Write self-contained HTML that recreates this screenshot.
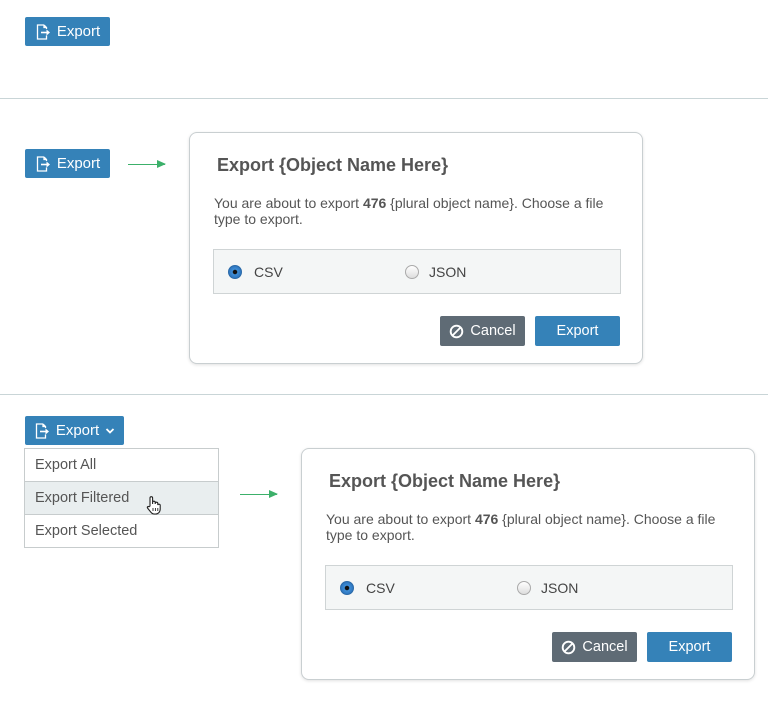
<!DOCTYPE html>
<html><head><meta charset="utf-8"><style>
*{box-sizing:border-box;margin:0;padding:0}
body{width:768px;height:702px;background:#fff;font-family:"Liberation Sans",Arial,sans-serif;position:relative;overflow:hidden;color:#555}
.abs{position:absolute}
.btn{position:absolute;background:#3582b8;color:#fff;border-radius:2px;font-size:15px;display:flex;align-items:center;justify-content:center;height:29px}
.hr{position:absolute;left:0;width:768px;height:1px;background:#c9d5d7}
.arrow{position:absolute;height:1px;background:#3cb06a}
.arrow:after{content:"";position:absolute;right:-1px;top:-4px;border-left:9px solid #3cb06a;border-top:4.5px solid transparent;border-bottom:4.5px solid transparent}
.dlg{position:absolute;width:454px;height:232px;border:1px solid #c9cfd1;border-radius:8px;background:#fff;box-shadow:0 1px 3px rgba(0,0,0,.12)}
.dlg h2{position:absolute;left:27px;top:22px;font-size:18px;font-weight:bold;color:#555}
.dlg p{position:absolute;left:24px;top:62px;width:398px;font-size:14px;line-height:16px;color:#555}
.box{position:absolute;left:23px;top:116px;width:408px;height:45px;border:1px solid #cfd4d5;background:#f4f6f6}
.radio{position:absolute;top:15px;width:14px;height:14px;border-radius:50%}
.r1{left:14px;background:radial-gradient(circle,#111 0 2px,#3f8fd8 2.5px,#2a6fb8 7px);border:1px solid #2b6aa8}
.r2{left:191px;background:linear-gradient(#fff,#ddd);border:1px solid #aaa}
.lbl{position:absolute;top:14px;font-size:14px;color:#444}
.cancel{position:absolute;left:250px;top:183px;width:85px;height:30px;background:#5f6b75;color:#fff;font-size:14.5px;display:flex;align-items:center;justify-content:center;border-radius:2px}
.exp{position:absolute;left:345px;top:183px;width:85px;height:30px;background:#3582b8;color:#fff;font-size:14.5px;display:flex;align-items:center;justify-content:center;border-radius:2px}
.dd{position:absolute;left:24px;top:448px;width:195px;height:100px;border:1px solid #c7cccd;background:#fff}
.dd div{height:33px;line-height:32px;padding-left:10px;font-size:14.5px;color:#555;border-bottom:1px solid #c7cccd}
.dd div:last-child{border-bottom:none}
</style></head><body>
<svg width="0" height="0" style="position:absolute"><defs>
<symbol id="fi" viewBox="0 0 16 16"><path d="M9 1H2.5v14h9V11.5M9 1l2.5 2.5V5M9 1v2.5h2.5" fill="none" stroke="#fff" stroke-width="1.3"/><path d="M6 8.5h6" stroke="#fff" stroke-width="1.6"/><path d="M11.5 5.5l3.5 3-3.5 3z" fill="#fff"/></symbol>
</defs></svg>

<div class="btn" style="left:25px;top:17px;width:85px"><svg width="16" height="16" style="margin-right:6px"><use href="#fi"/></svg>Export</div>
<div class="hr" style="top:98px"></div>

<div class="btn" style="left:25px;top:149px;width:85px"><svg width="16" height="16" style="margin-right:6px"><use href="#fi"/></svg>Export</div>
<div class="arrow" style="left:128px;top:164px;width:37px"></div>

<div class="dlg" style="left:189px;top:132px">
<h2>Export {Object Name Here}</h2>
<p>You are about to export <b>476</b> {plural object name}. Choose a file type to export.</p>
<div class="box"><div class="radio r1"></div><span class="lbl" style="left:40px">CSV</span><div class="radio r2"></div><span class="lbl" style="left:215px">JSON</span></div>
<div class="cancel"><svg width="15" height="15" viewBox="0 0 16 16" style="margin-right:6px"><circle cx="8" cy="8" r="6.2" fill="none" stroke="#fff" stroke-width="2"/><path d="M4 12L12 4" stroke="#fff" stroke-width="2"/></svg>Cancel</div>
<div class="exp">Export</div>
</div>

<div class="hr" style="top:394px"></div>

<div class="btn" style="left:25px;top:416px;width:99px"><svg width="16" height="16" style="margin-right:6px"><use href="#fi"/></svg>Export<svg width="10" height="8" viewBox="0 0 10 8" style="margin-left:6px"><path d="M1.5 2l3.5 3.5L8.5 2" fill="none" stroke="#fff" stroke-width="1.8"/></svg></div>
<div class="dd"><div>Export All</div><div style="background:#e9eeef">Export Filtered</div><div>Export Selected</div></div>
<svg class="abs" style="left:145px;top:495px" width="18" height="20" viewBox="0 0 18 20"><path d="M5 11V3a1.3 1.3 0 012.6 0v6V7.5a1.3 1.3 0 012.6 0V9 8.5a1.3 1.3 0 012.6 0V10a1.3 1.3 0 012.4 0v4c0 3-2 5-4.5 5H9c-2 0-3-1.5-4.5-3.5L2.5 13c-.6-1 .6-2 1.5-1.2z" fill="#fff" stroke="#222" stroke-width="1.1"/><path d="M8 13v3M10.4 13v3M12.8 13v3" stroke="#222" stroke-width=".9"/></svg>
<div class="arrow" style="left:240px;top:494px;width:37px"></div>

<div class="dlg" style="left:301px;top:448px">
<h2>Export {Object Name Here}</h2>
<p>You are about to export <b>476</b> {plural object name}. Choose a file type to export.</p>
<div class="box"><div class="radio r1"></div><span class="lbl" style="left:40px">CSV</span><div class="radio r2"></div><span class="lbl" style="left:215px">JSON</span></div>
<div class="cancel"><svg width="15" height="15" viewBox="0 0 16 16" style="margin-right:6px"><circle cx="8" cy="8" r="6.2" fill="none" stroke="#fff" stroke-width="2"/><path d="M4 12L12 4" stroke="#fff" stroke-width="2"/></svg>Cancel</div>
<div class="exp">Export</div>
</div>
</body></html>
